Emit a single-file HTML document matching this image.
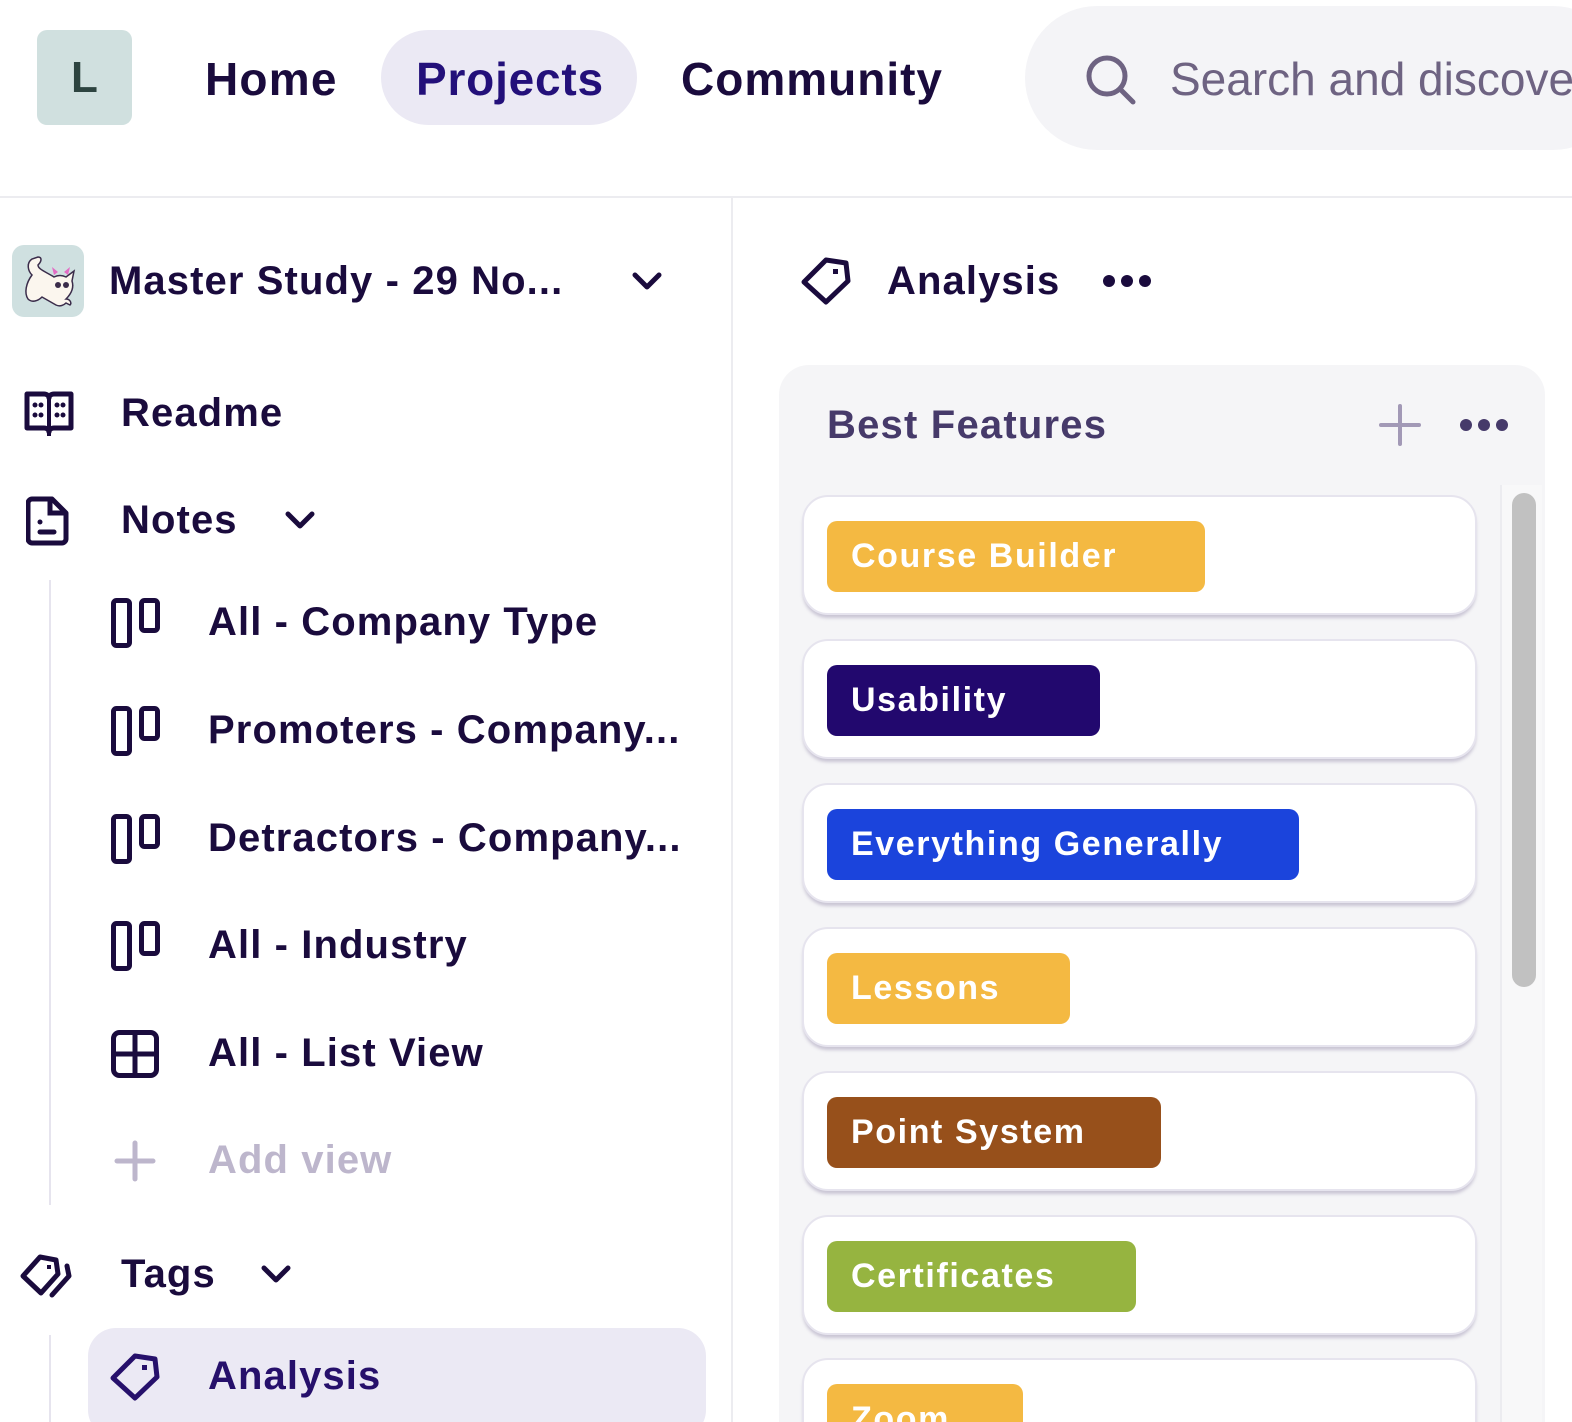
<!DOCTYPE html>
<html style="width:1572px;height:1422px;overflow:hidden"><head><meta charset="utf-8"><style>
*{margin:0;padding:0;box-sizing:border-box}
body{width:1572px;height:1422px;overflow:hidden;background:#fff;font-family:"Liberation Sans",sans-serif;font-weight:bold;color:#1a0b3d;position:relative}
.a{position:absolute}
.t{position:absolute;white-space:nowrap;line-height:1}
.s{letter-spacing:1.1px}
.card{position:absolute;left:802px;width:675px;height:120px;background:#fff;border:2px solid #e6e4ee;border-radius:26px;box-shadow:0 4px 3px -1px rgba(120,110,150,.35)}
.tag{position:absolute;left:23px;top:24px;height:71px;border-radius:10px;color:#fff;font-size:34px;line-height:71px;padding-left:24px;white-space:nowrap;letter-spacing:1.6px}
</style></head><body>
<div class="a" style="left:37px;top:30px;width:95px;height:95px;background:#d0e0df;border-radius:10px;color:#2d4440;font-size:44px;text-align:center;line-height:95px">L</div>
<div class="t" style="left:205px;top:56px;font-size:46px;letter-spacing:1.2px">Home</div>
<div class="a" style="left:381px;top:30px;width:256px;height:95px;background:#ebe9f4;border-radius:48px"></div>
<div class="t" style="left:416px;top:56px;font-size:46px;color:#23107a;letter-spacing:0.8px">Projects</div>
<div class="t" style="left:681px;top:56px;font-size:46px;letter-spacing:1px">Community</div>
<div class="a" style="left:1025px;top:6px;width:600px;height:144px;background:#f4f4f7;border-radius:72px"></div>
<svg class="a" style="left:1083px;top:52px" width="56" height="56" viewBox="0 0 56 56"><circle cx="24" cy="24" r="18" fill="none" stroke="#6e6382" stroke-width="5"/><line x1="37" y1="37" x2="50" y2="50" stroke="#6e6382" stroke-width="5" stroke-linecap="round"/></svg>
<div class="t" style="left:1170px;top:56px;font-size:46px;color:#6e6382;font-weight:normal">Search and discover</div>
<div class="a" style="left:0;top:196px;width:1572px;height:2px;background:#ececf0"></div>
<div class="a" style="left:731px;top:198px;width:2px;height:1224px;background:#ececf0"></div>

<div class="a" style="left:12px;top:245px;width:72px;height:72px;background:#cfe0e0;border-radius:12px;overflow:hidden">
<svg width="72" height="72" viewBox="0 0 72 72"><path d="M20 14c-6 4-4 12 0 16 -6 8-8 18-4 24 4 4 10 2 14-2l14 8c4 2 8 0 10-2l4 2c2-2 0-6-4-6 6-6 8-12 6-18l2-10-8 6c-4-2-8-2-12 0C32 26 26 24 26 20c4-4 4-8 0-8z" fill="#fbf6ee" stroke="#3a2c4a" stroke-width="1.5"/><path d="M42 30l-2-8 6 5zM56 30l2-8-6 5z" fill="#e36bc4"/><circle cx="46" cy="40" r="3" fill="#3a2c4a"/><circle cx="54" cy="40" r="3" fill="#3a2c4a"/></svg></div>
<div class="t s" style="left:109px;top:261px;font-size:40px">Master Study - 29 No...</div>
<svg class="a" style="left:631px;top:270px" width="32" height="22" viewBox="0 0 32 22"><path d="M4 5l12 12 12-12" fill="none" stroke="#1a0b3d" stroke-width="5" stroke-linecap="round" stroke-linejoin="round"/></svg>

<svg class="a" style="left:24px;top:390px" width="50" height="48" viewBox="0 0 50 48"><path d="M3 4h17c3 0 5 2 5 4 0-2 2-4 5-4h17v34H30c-3 0-5 2-5 4 0-2-2-4-5-4H3z" fill="none" stroke="#1a0b3d" stroke-width="5" stroke-linejoin="round"/><line x1="25" y1="8" x2="25" y2="46" stroke="#1a0b3d" stroke-width="4"/><circle cx="11" cy="15" r="2.5" fill="#1a0b3d"/><circle cx="17" cy="15" r="2.5" fill="#1a0b3d"/><circle cx="11" cy="25" r="2.5" fill="#1a0b3d"/><circle cx="17" cy="25" r="2.5" fill="#1a0b3d"/><circle cx="33" cy="15" r="2.5" fill="#1a0b3d"/><circle cx="39" cy="15" r="2.5" fill="#1a0b3d"/><circle cx="33" cy="25" r="2.5" fill="#1a0b3d"/><circle cx="39" cy="25" r="2.5" fill="#1a0b3d"/></svg>
<div class="t s" style="left:121px;top:393px;font-size:40px">Readme</div>

<svg class="a" style="left:26px;top:496px" width="46" height="50" viewBox="0 0 46 50"><path d="M6 3h20l14 14v26c0 2-2 4-4 4H6c-2 0-4-2-4-4V7c0-2 2-4 4-4z" fill="none" stroke="#1a0b3d" stroke-width="5" stroke-linejoin="round"/><path d="M24 3v14h16" fill="none" stroke="#1a0b3d" stroke-width="5"/><line x1="14" y1="26" x2="14" y2="26" stroke="#1a0b3d" stroke-width="5" stroke-linecap="round"/><line x1="14" y1="36" x2="28" y2="36" stroke="#1a0b3d" stroke-width="5" stroke-linecap="round"/></svg>
<div class="t s" style="left:121px;top:500px;font-size:40px">Notes</div>
<svg class="a" style="left:284px;top:509px" width="32" height="22" viewBox="0 0 32 22"><path d="M4 5l12 12 12-12" fill="none" stroke="#1a0b3d" stroke-width="5" stroke-linecap="round" stroke-linejoin="round"/></svg>

<div class="a" style="left:49px;top:580px;width:2px;height:625px;background:#e6e4ee"></div>
<div class="a" style="left:49px;top:1335px;width:2px;height:87px;background:#e6e4ee"></div>

<svg class="a" style="left:110px;top:597px" width="52" height="52" viewBox="0 0 52 52"><rect x="3.5" y="3.5" width="16" height="45" rx="3" fill="none" stroke="#1a0b3d" stroke-width="5"/><rect x="31.5" y="3.5" width="16" height="30" rx="3" fill="none" stroke="#1a0b3d" stroke-width="5"/></svg>
<div class="t s" style="left:208px;top:602px;font-size:40px">All - Company Type</div>
<svg class="a" style="left:110px;top:705px" width="52" height="52" viewBox="0 0 52 52"><rect x="3.5" y="3.5" width="16" height="45" rx="3" fill="none" stroke="#1a0b3d" stroke-width="5"/><rect x="31.5" y="3.5" width="16" height="30" rx="3" fill="none" stroke="#1a0b3d" stroke-width="5"/></svg>
<div class="t s" style="left:208px;top:710px;font-size:40px">Promoters - Company...</div>
<svg class="a" style="left:110px;top:813px" width="52" height="52" viewBox="0 0 52 52"><rect x="3.5" y="3.5" width="16" height="45" rx="3" fill="none" stroke="#1a0b3d" stroke-width="5"/><rect x="31.5" y="3.5" width="16" height="30" rx="3" fill="none" stroke="#1a0b3d" stroke-width="5"/></svg>
<div class="t s" style="left:208px;top:818px;font-size:40px">Detractors - Company...</div>
<svg class="a" style="left:110px;top:920px" width="52" height="52" viewBox="0 0 52 52"><rect x="3.5" y="3.5" width="16" height="45" rx="3" fill="none" stroke="#1a0b3d" stroke-width="5"/><rect x="31.5" y="3.5" width="16" height="30" rx="3" fill="none" stroke="#1a0b3d" stroke-width="5"/></svg>
<div class="t s" style="left:208px;top:925px;font-size:40px">All - Industry</div>
<svg class="a" style="left:110px;top:1029px" width="50" height="50" viewBox="0 0 50 50"><rect x="3.5" y="3.5" width="43" height="43" rx="6" fill="none" stroke="#1a0b3d" stroke-width="5"/><line x1="25" y1="4" x2="25" y2="46" stroke="#1a0b3d" stroke-width="5"/><line x1="4" y1="25" x2="46" y2="25" stroke="#1a0b3d" stroke-width="5"/></svg>
<div class="t s" style="left:208px;top:1033px;font-size:40px">All - List View</div>
<svg class="a" style="left:114px;top:1140px" width="42" height="42" viewBox="0 0 42 42"><path d="M21 3v36M3 21h36" stroke="#bdb6cc" stroke-width="5" stroke-linecap="round"/></svg>
<div class="t s" style="left:208px;top:1140px;font-size:40px;color:#bdb6cc">Add view</div>

<svg class="a" style="left:20px;top:1252px" width="56" height="48" viewBox="0 0 56 48"><path d="M3 24L20 5l16 3 2 14-17 19z" fill="none" stroke="#1a0b3d" stroke-width="5" stroke-linejoin="round"/><rect x="27" y="13" width="4" height="4" fill="#1a0b3d"/><path d="M47 14l2 10-17 19" fill="none" stroke="#1a0b3d" stroke-width="5" stroke-linecap="round" stroke-linejoin="round"/></svg>
<div class="t s" style="left:121px;top:1254px;font-size:40px">Tags</div>
<svg class="a" style="left:260px;top:1263px" width="32" height="22" viewBox="0 0 32 22"><path d="M4 5l12 12 12-12" fill="none" stroke="#1a0b3d" stroke-width="5" stroke-linecap="round" stroke-linejoin="round"/></svg>

<div class="a" style="left:88px;top:1328px;width:618px;height:110px;background:#ebe9f4;border-radius:28px"></div>
<svg class="a" style="left:110px;top:1352px" width="50" height="50" viewBox="0 0 50 50"><path d="M3 26L25 4l20 3 2 18-22 21z" fill="none" stroke="#26106b" stroke-width="5" stroke-linejoin="round"/><rect x="32" y="13" width="5" height="5" fill="#26106b"/></svg>
<div class="t s" style="left:208px;top:1356px;font-size:40px;color:#26106b">Analysis</div>

<svg class="a" style="left:801px;top:256px" width="52" height="52" viewBox="0 0 52 52"><path d="M3 26L25 4l20 3 2 18-22 21z" fill="none" stroke="#1a0b3d" stroke-width="5" stroke-linejoin="round"/><rect x="32" y="13" width="5" height="5" fill="#1a0b3d"/></svg>
<div class="t s" style="left:887px;top:261px;font-size:40px">Analysis</div>
<svg class="a" style="left:1102px;top:272px" width="50" height="18" viewBox="0 0 50 18"><circle cx="7" cy="9" r="6" fill="#1a0b3d"/><circle cx="25" cy="9" r="6" fill="#1a0b3d"/><circle cx="43" cy="9" r="6" fill="#1a0b3d"/></svg>

<div class="a" style="left:779px;top:365px;width:766px;height:1100px;background:#f5f5f7;border-radius:30px"></div>
<div class="t" style="left:827px;top:405px;font-size:40px;color:#463a6a;letter-spacing:1.2px">Best Features</div>
<svg class="a" style="left:1378px;top:403px" width="44" height="44" viewBox="0 0 44 44"><path d="M22 3v38M3 22h38" stroke="#a299b6" stroke-width="4" stroke-linecap="round"/></svg>
<svg class="a" style="left:1459px;top:417px" width="52" height="16" viewBox="0 0 52 16"><circle cx="7" cy="8" r="6" fill="#463a6a"/><circle cx="25" cy="8" r="6" fill="#463a6a"/><circle cx="43" cy="8" r="6" fill="#463a6a"/></svg>

<div class="a" style="left:1500px;top:485px;width:2px;height:937px;background:#ececf0"></div>
<div class="a" style="left:1502px;top:485px;width:40px;height:937px;background:#f8f8f9"></div>
<div class="a" style="left:1512px;top:493px;width:24px;height:494px;background:#c1c1c1;border-radius:12px"></div>

<div class="card" style="top:495px"><div class="tag" style="width:378px;background:#f4b942">Course Builder</div></div>
<div class="card" style="top:639px"><div class="tag" style="width:273px;background:#22086e">Usability</div></div>
<div class="card" style="top:783px"><div class="tag" style="width:472px;background:#1b44dc">Everything Generally</div></div>
<div class="card" style="top:927px"><div class="tag" style="width:243px;background:#f4b942">Lessons</div></div>
<div class="card" style="top:1071px"><div class="tag" style="width:334px;background:#97501b">Point System</div></div>
<div class="card" style="top:1215px"><div class="tag" style="width:309px;background:#96b440">Certificates</div></div>
<div class="card" style="top:1358px"><div class="tag" style="width:196px;background:#f4b942">Zoom</div></div>
</body></html>
